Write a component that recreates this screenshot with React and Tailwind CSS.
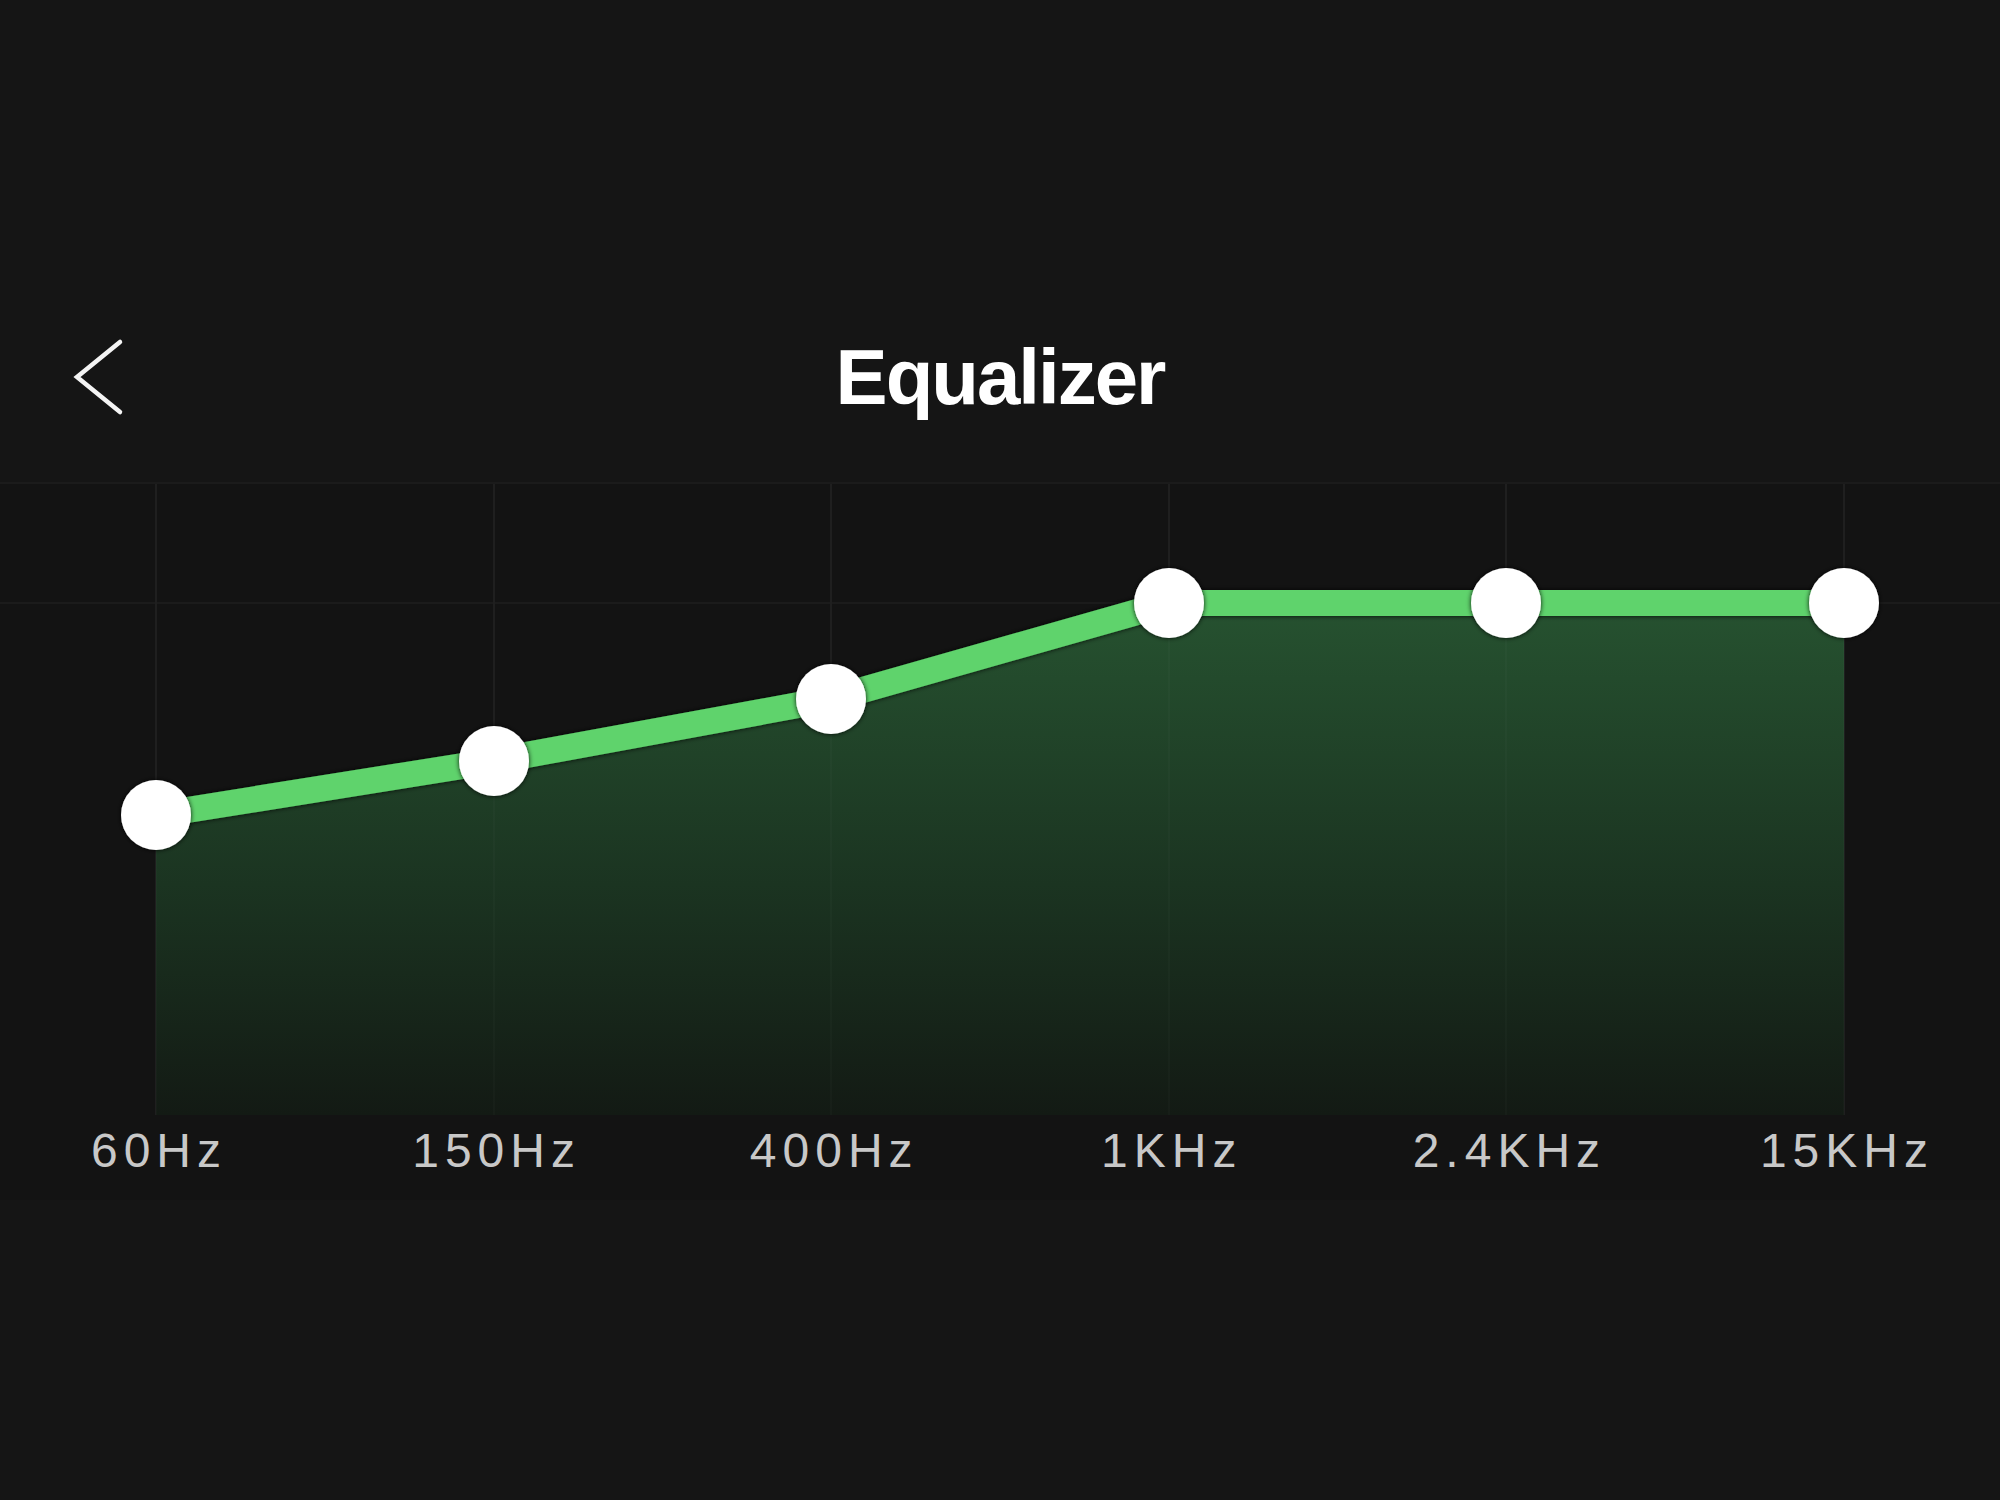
import React from "react";

const XS = [156, 494, 831, 1169, 1506, 1844];
const PTS = [
  [156, 331],
  [494, 277],
  [831, 215],
  [1169, 119],
  [1506, 119],
  [1844, 119],
];
const LABELS = ["60Hz", "150Hz", "400Hz", "1KHz", "2.4KHz", "15KHz"];

function Chart() {
  const H = 631;
  const line = PTS.map((p) => p.join(",")).join(" ");
  const area = `${line} 1844,${H} 156,${H}`;
  return (
    <svg width="2000" height={H} viewBox={`0 0 2000 ${H}`} className="block">
      <defs>
        <linearGradient id="eqfill" x1="0" y1="0" x2="0" y2="1">
          <stop offset="0" stopColor="#265230" />
          <stop offset="0.55" stopColor="#1b3421" />
          <stop offset="1" stopColor="#131a14" />
        </linearGradient>
        <filter id="sh" x="-20%" y="-20%" width="140%" height="140%">
          <feDropShadow dx="0" dy="0" stdDeviation="2.5" floodColor="#000" floodOpacity="0.9" />
        </filter>
      </defs>
      <line x1="0" y1="119" x2="2000" y2="119" stroke="#1b1b1b" strokeWidth="2" />
      {XS.map((x) => (
        <line key={x} x1={x} y1="0" x2={x} y2={H} stroke="#1b1b1b" strokeWidth="2" />
      ))}
      <polygon points={area} fill="url(#eqfill)" />
      {XS.map((x) => (
        <line key={"o" + x} x1={x} y1="0" x2={x} y2={H} stroke="#ffffff" strokeOpacity="0.02" strokeWidth="2" />
      ))}
      <polyline
        points={line}
        fill="none"
        stroke="#5fd36c"
        strokeWidth="26"
        strokeLinejoin="round"
        filter="url(#sh)"
      />
      {PTS.map(([x, y]) => (
        <circle key={x} cx={x} cy={y} r="35" fill="#ffffff" filter="url(#sh)" />
      ))}
    </svg>
  );
}

export default function App() {
  return (
    <div
      className="w-[2000px] h-[1500px] bg-[#151515] pt-[317px] overflow-hidden"
      style={{ fontFamily: "'Liberation Sans', Arial, sans-serif" }}
    >
      <div className="grid grid-cols-[1fr_auto_1fr] items-center h-[120px]">
        <div className="pl-[73px] flex items-center">
          <svg width="52" height="78" viewBox="0 0 52 78" fill="none">
            <path
              d="M47 4 L4 39 L47 74"
              stroke="#f4f4f4"
              strokeWidth="4.5"
              strokeLinecap="round"
              strokeLinejoin="miter"
            />
          </svg>
        </div>
        <h1 className="text-[78px] leading-[78px] font-bold text-white tracking-[-2px]">
          Equalizer
        </h1>
        <div />
      </div>
      <div className="mt-[45px] border-t-2 border-[#1b1b1b] bg-[#131313]">
        <Chart />
        <div className="flex gap-[37.6px] pl-[6px] pt-[12px] pb-[25px]">
          {LABELS.map((l) => (
            <div key={l} className="w-[300px] shrink-0 flex justify-center">
              <span className="pl-[6px] text-[48px] leading-[48px] tracking-[6px] text-[#c8c8c8]">
                {l}
              </span>
            </div>
          ))}
        </div>
      </div>
    </div>
  );
}
